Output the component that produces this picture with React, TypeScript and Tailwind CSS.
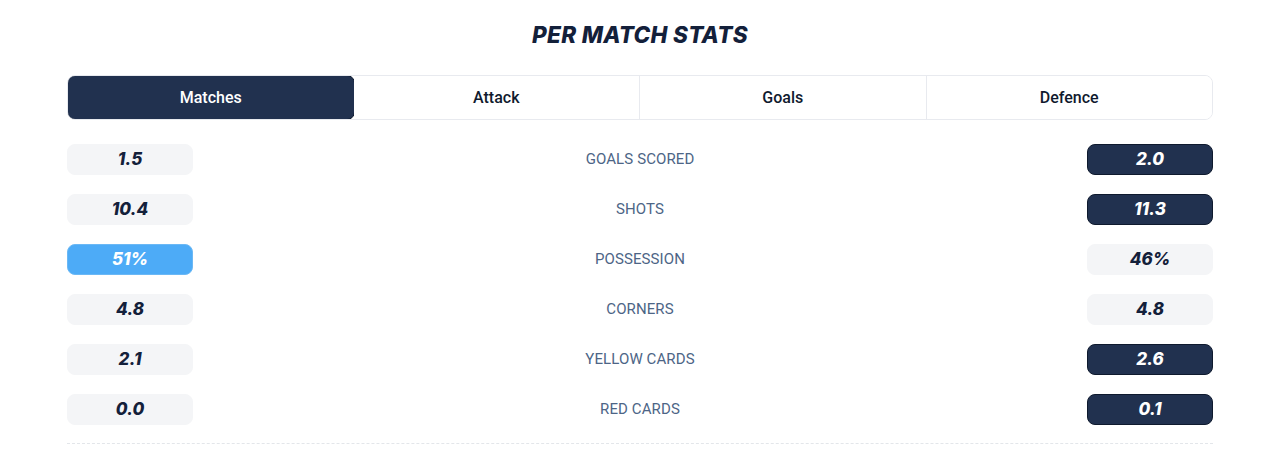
import React from "react";

type Row = { label: string; left: string; right: string; lt: "light" | "dark" | "blue"; rt: "light" | "dark" | "blue" };

const rows: Row[] = [
  { label: "GOALS SCORED", left: "1.5", right: "2.0", lt: "light", rt: "dark" },
  { label: "SHOTS", left: "10.4", right: "11.3", lt: "light", rt: "dark" },
  { label: "POSSESSION", left: "51%", right: "46%", lt: "blue", rt: "light" },
  { label: "CORNERS", left: "4.8", right: "4.8", lt: "light", rt: "light" },
  { label: "YELLOW CARDS", left: "2.1", right: "2.6", lt: "light", rt: "dark" },
  { label: "RED CARDS", left: "0.0", right: "0.1", lt: "light", rt: "dark" },
];

const pillCls = {
  light: "bg-[#f4f5f7] border-[#f4f5f7] text-[#13203a]",
  dark: "bg-[#21314f] border-[#0f1a2e] text-white",
  blue: "bg-[#4dabf7] border-[#6bb8f5] text-white",
};

function Pill({ v, t }: { v: string; t: "light" | "dark" | "blue" }) {
  return (
    <div
      className={`w-[126px] h-[31px] rounded-[8px] border flex items-center justify-center text-[17px] font-extrabold italic ${pillCls[t]}`}
      style={{ fontFamily: "Inter, 'Open Sans', sans-serif" }}
    >
      {v}
    </div>
  );
}

export default function App() {
  const tabs = ["Matches", "Attack", "Goals", "Defence"];
  return (
    <div className="w-[1280px] h-[453px] bg-white">
      <div className="w-[1146px] ml-[67px] pt-[21px]">
        <h2
          className="text-center text-[22.5px] leading-[28px] font-extrabold italic text-[#13203a] tracking-[0.3px]"
          style={{ fontFamily: "Inter, 'Open Sans', sans-serif" }}
        >
          PER MATCH STATS
        </h2>
        <div className="mt-[26px] h-[45px] flex rounded-[8px] border border-[#e8eaef] overflow-hidden">
          {tabs.map((t, i) => (
            <div
              key={t}
              className={`flex-1 flex items-center justify-center text-[16px] font-medium ${
                i === 0
                  ? "bg-[#21314f] text-white rounded-[8px] -m-px border border-[#0f1a2e]"
                  : "text-[#0f1a2e] bg-white"
              } ${i > 1 ? "border-l border-[#e8eaef]" : ""}`}
              style={{ fontFamily: "Roboto, sans-serif" }}
            >
              {t}
            </div>
          ))}
        </div>
        <div className="mt-[24px] flex flex-col gap-[19px] pb-[18px] border-b border-dashed border-[#e3e6ea]">
          {rows.map((r) => (
            <div key={r.label} className="flex items-center justify-between">
              <Pill v={r.left} t={r.lt} />
              <div
                className="text-[15px] text-[#4d6586] tracking-[0.1px]"
                style={{ fontFamily: "Roboto, sans-serif" }}
              >
                {r.label}
              </div>
              <Pill v={r.right} t={r.rt} />
            </div>
          ))}
        </div>
      </div>
    </div>
  );
}
